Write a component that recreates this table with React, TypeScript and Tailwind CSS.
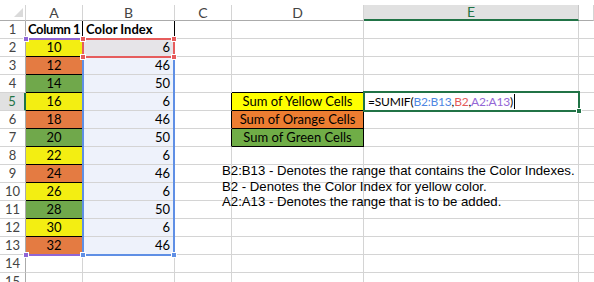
import React from "react";

// Spreadsheet grid: row header + columns A..F
const colWidths = ["w-[26px]", "w-[57px]", "w-[92px]", "w-[57px]", "w-[132px]", "w-[215px]", "w-[15px]"];

const colorFill: Record<string, string> = {
  y: "bg-[#f3ee12]",
  o: "bg-[#e47b42]",
  g: "bg-[#70a84b]",
};

const data = [
  { a: 10, b: 6, c: "y" },
  { a: 12, b: 46, c: "o" },
  { a: 14, b: 50, c: "g" },
  { a: 16, b: 6, c: "y" },
  { a: 18, b: 46, c: "o" },
  { a: 20, b: 50, c: "g" },
  { a: 22, b: 6, c: "y" },
  { a: 24, b: 46, c: "o" },
  { a: 26, b: 6, c: "y" },
  { a: 28, b: 50, c: "g" },
  { a: 30, b: 6, c: "y" },
  { a: 32, b: 46, c: "o" },
];

const sumCells: Record<number, { label: string; bg: string }> = {
  5: { label: "Sum of Yellow Cells", bg: "bg-[#ffff00]" },
  6: { label: "Sum of Orange Cells", bg: "bg-[#ed7d31]" },
  7: { label: "Sum of Green Cells", bg: "bg-[#70ad47]" },
};

function Handle({ className }: { className: string }) {
  return <div className={`absolute h-[6px] w-[6px] border border-white ${className}`} />;
}

export default function App(): React.ReactElement {
  const rows = Array.from({ length: 15 }, (_, i) => i + 1);

  return (
    <div
      className="relative h-[282px] w-[594px] overflow-hidden bg-white text-[13px] text-black"
      style={{ fontFamily: "Lato, 'Liberation Sans', sans-serif" }}
    >
      <div className="h-[5px]" />

      {/* Column headers */}
      <div className="flex h-[16px] text-[14px] text-[#444]">
        <div className={`${colWidths[0]} relative border-r border-b border-r-[#d4d4d4] border-b-[#ababab]`}>
          <svg className="absolute left-[14px] top-[3px]" width="9" height="9" viewBox="0 0 9 9">
            <polygon points="9,0 9,9 0,9" fill="#dadada" />
          </svg>
        </div>
        {["A", "B", "C", "D", "E", ""].map((l, i) =>
          l === "E" ? (
            <div
              key={i}
              className={`${colWidths[i + 1]} flex items-center justify-center border-r border-r-[#c6c6c6] border-b-2 border-b-[#217346] bg-[#e1e1e1] text-[#217346] leading-none`}
            >
              {l}
            </div>
          ) : (
            <div
              key={i}
              className={`${colWidths[i + 1]} flex items-center justify-center border-r border-b border-r-[#d4d4d4] border-b-[#ababab] leading-none`}
            >
              {l}
            </div>
          )
        )}
      </div>

      {rows.map((r) => {
        const d = r >= 2 && r <= 13 ? data[r - 2] : null;
        const sum = sumCells[r];
        return (
          <div key={r} className="flex h-[18px]">
            {/* Row header */}
            {r === 5 ? (
              <div className={`${colWidths[0]} flex items-center justify-center border-r-2 border-b border-r-[#217346] border-b-[#d4d4d4] bg-[#e1e1e1] text-[#217346]`}>
                {r}
              </div>
            ) : (
              <div className={`${colWidths[0]} flex items-center justify-center border-r border-b border-r-[#ababab] border-b-[#d4d4d4] text-[#444]`}>
                {r}
              </div>
            )}

            {/* A */}
            {r === 1 ? (
              <div className={`${colWidths[1]} flex items-center whitespace-nowrap border-r border-b border-r-black border-b-[#d4d4d4] pl-[2px] font-bold tracking-[-0.4px]`}>
                Column 1
              </div>
            ) : d ? (
              <div className={`${colWidths[1]} flex items-center justify-center border-r border-b border-black ${colorFill[d.c]}`}>
                {d.a}
              </div>
            ) : (
              <div className={`${colWidths[1]} border-r border-b border-[#d4d4d4]`} />
            )}

            {/* B */}
            {r === 1 ? (
              <div className={`${colWidths[2]} flex items-center whitespace-nowrap border-r border-b border-r-black border-b-[#d4d4d4] pl-[3px] font-bold`}>
                Color Index
              </div>
            ) : d ? (
              <div
                className={`${colWidths[2]} flex items-center justify-end border-r border-b border-[#d4d4d4] pr-[4px] ${
                  r === 2 ? "bg-[#e6e4e8]" : "bg-[#eef2fb]"
                }`}
              >
                {d.b}
              </div>
            ) : (
              <div className={`${colWidths[2]} border-r border-b border-[#d4d4d4]`} />
            )}

            {/* C */}
            <div className={`${colWidths[3]} border-r border-b ${sum ? "border-r-black border-b-[#d4d4d4]" : "border-[#d4d4d4]"}`} />

            {/* D */}
            {sum ? (
              <div className={`${colWidths[4]} flex items-center justify-center whitespace-nowrap border-r border-b border-black ${sum.bg}`}>
                {sum.label}
              </div>
            ) : (
              <div className={`${colWidths[4]} border-r border-b ${r === 4 ? "border-r-[#d4d4d4] border-b-black" : "border-[#d4d4d4]"}`} />
            )}

            {/* E */}
            {r === 5 ? (
              <div className={`${colWidths[5]} flex items-center whitespace-nowrap border-r border-b border-[#d4d4d4] pl-[4px] text-[12px] tracking-[-0.2px]`}>
                <span>=SUMIF(</span>
                <span className="text-[#4f86e2]">B2:B13</span>
                <span>,</span>
                <span className="text-[#e35a5a]">B2</span>
                <span>,</span>
                <span className="text-[#9466d6]">A2:A13</span>
                <span>)</span>
                <span className="ml-[1px] h-[15px] w-px bg-black" />
              </div>
            ) : (
              <div className={`${colWidths[5]} border-r border-b border-[#d4d4d4]`} />
            )}

            {/* F */}
            <div className={`${colWidths[6]} border-b border-[#d4d4d4]`} />
          </div>
        );
      })}

      {/* Range highlight A2:A13 (purple) */}
      <div className="absolute left-[26px] top-[38px] h-[2px] w-[57px] bg-[#9066d5]" />
      <div className="absolute left-[26px] top-[254px] h-[2px] w-[57px] bg-[#9066d5]" />
      <Handle className="left-[23px] top-[36px] bg-[#9066d5]" />
      <Handle className="left-[23px] top-[252px] bg-[#9066d5]" />

      {/* Range highlight B2:B13 (blue) */}
      <div className="absolute left-[82px] top-[39px] h-[217px] w-[2px] bg-[#5f8fe5]" />
      <div className="absolute left-[173px] top-[39px] h-[217px] w-[2px] bg-[#5f8fe5]" />
      <div className="absolute left-[82px] top-[254px] h-[2px] w-[93px] bg-[#5f8fe5]" />
      <Handle className="left-[80px] top-[252px] bg-[#5f8fe5]" />
      <Handle className="left-[171px] top-[252px] bg-[#5f8fe5]" />

      {/* Criteria cell B2 (red) */}
      <div className="absolute left-[82px] top-[38px] h-[20px] w-[93px] border-2 border-[#e65c5c]" />
      <Handle className="left-[80px] top-[36px] bg-[#e65c5c]" />
      <Handle className="left-[171px] top-[36px] bg-[#e65c5c]" />
      <Handle className="left-[80px] top-[54px] bg-[#e65c5c]" />
      <Handle className="left-[171px] top-[54px] bg-[#e65c5c]" />

      {/* Active cell E5 */}
      <div className="absolute left-[363px] top-[91px] h-[21px] w-[217px] border-2 border-[#217346]" />
      <Handle className="left-[576px] top-[108px] bg-[#217346]" />

      {/* Notes text box */}
      <div
        className="absolute left-[222px] top-[163px] text-[13.2px] leading-[15.5px] text-black"
        style={{ fontFamily: "'Liberation Sans', Arial, sans-serif" }}
      >
        <p>B2:B13 - Denotes the range that contains the Color Indexes.</p>
        <p>B2 - Denotes the Color Index for yellow color.</p>
        <p>A2:A13 - Denotes the range that is to be added.</p>
      </div>
    </div>
  );
}
